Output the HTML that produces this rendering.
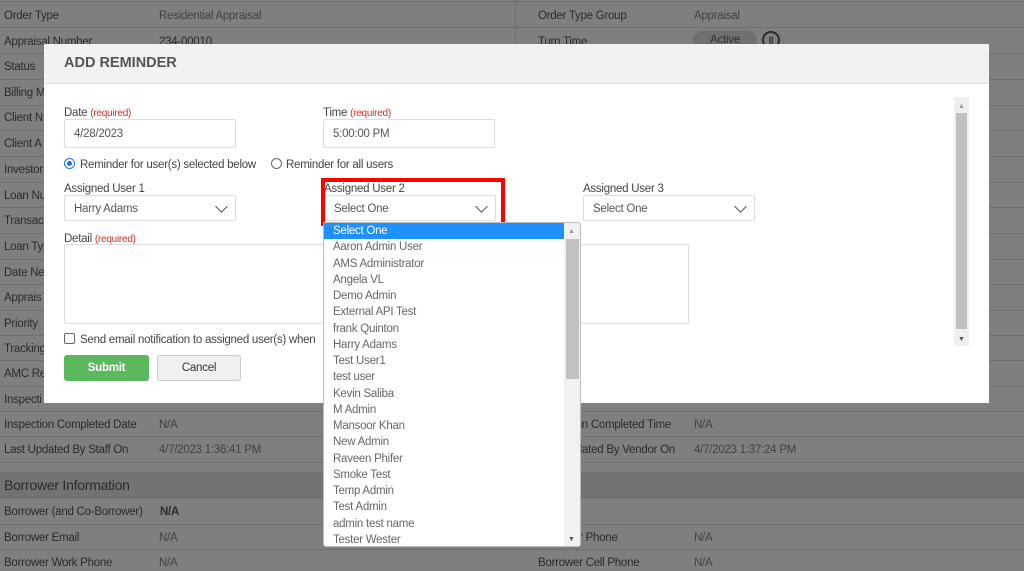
<!DOCTYPE html>
<html><head><style>
*{box-sizing:border-box;margin:0;padding:0}
body{width:1024px;height:571px;overflow:hidden;background:#7f7f7f;font-family:"Liberation Sans",sans-serif;font-size:11.5px;letter-spacing:-0.25px;line-height:16px;color:#2b2b2b;position:relative}
.a{position:absolute;white-space:nowrap}
.ln{position:absolute;left:0;width:1024px;height:1px;background:#6f6f6f}
.vl{position:absolute;left:515px;width:1px;background:#6f6f6f;top:0;height:411px}
.modal{position:absolute;left:44px;top:44px;width:945px;height:359px;background:#fff}
.mh{height:40px;background:#f2f2f2;border-bottom:1px solid #ddd;padding:11px 0 0 20px;font-size:14.5px;font-weight:bold;color:#555;letter-spacing:0}
.lab{position:absolute;color:#444;white-space:nowrap}
.req{color:#c9302c;font-size:10px}
.inp{position:absolute;height:29px;border:1px solid #ddd;border-radius:2px;background:#fff;padding:6px 9px;color:#555}
.chev{position:absolute;right:9px;top:9px;width:9px;height:9px;border-right:1.5px solid #555;border-bottom:1.5px solid #555;transform:rotate(45deg)}
.dd{position:absolute;left:323px;top:222px;width:258px;height:325px;background:#fff;border:1px solid #bbb;border-radius:0 3px 3px 3px;overflow:hidden}
.it{height:16.25px;line-height:17px;padding-left:9px;color:#666}
.it.s{background:#1e90ff;color:#fff}
</style></head><body>
<div class="ln" style="top:1px"></div>
<div class="ln" style="top:27px"></div><div class="ln" style="top:53px"></div><div class="ln" style="top:79px"></div><div class="ln" style="top:105px"></div><div class="ln" style="top:130px"></div><div class="ln" style="top:156px"></div><div class="ln" style="top:182px"></div><div class="ln" style="top:207px"></div><div class="ln" style="top:233px"></div><div class="ln" style="top:259px"></div><div class="ln" style="top:284px"></div><div class="ln" style="top:310px"></div><div class="ln" style="top:335px"></div><div class="ln" style="top:360px"></div><div class="ln" style="top:386px"></div><div class="ln" style="top:411px"></div><div class="ln" style="top:436px"></div><div class="ln" style="top:462px"></div>
<div class="a" style="left:0;top:472px;width:1024px;height:26px;background:#737373;border-bottom:1px solid #6a6a6a"></div>
<div class="ln" style="top:524px"></div><div class="ln" style="top:549px"></div>
<div class="vl"></div>
<div class="a" style="left:4px;top:8px">Order Type</div><div class="a" style="left:159px;top:8px;color:#444">Residential Appraisal</div>
<div class="a" style="left:538px;top:8px">Order Type Group</div><div class="a" style="left:694px;top:8px;color:#444">Appraisal</div>
<div class="a" style="left:4px;top:34px">Appraisal Number</div><div class="a" style="left:159px;top:34px">234-00010</div>
<div class="a" style="left:538px;top:34px">Turn Time</div>
<div class="a" style="left:693px;top:31px;width:64px;height:18px;border-radius:9px;background:#6f6f6f;text-align:center;line-height:19px;color:#333">Active</div>
<div class="a" style="left:762px;top:31px;width:18px;height:18px;border-radius:50%;border:2px solid #2b2b2b;font-size:9px;font-weight:bold;text-align:center;line-height:14px">||</div>
<div class="a" style="left:4px;top:59px">Status</div><div class="a" style="left:4px;top:85px">Billing M</div><div class="a" style="left:4px;top:110px">Client N</div><div class="a" style="left:4px;top:136px">Client A</div><div class="a" style="left:4px;top:162px">Investor</div><div class="a" style="left:4px;top:188px">Loan Nu</div><div class="a" style="left:4px;top:213px">Transac</div><div class="a" style="left:4px;top:239px">Loan Typ</div><div class="a" style="left:4px;top:265px">Date Ne</div><div class="a" style="left:4px;top:290px">Apprais</div><div class="a" style="left:4px;top:316px">Priority</div><div class="a" style="left:4px;top:341px">Tracking</div><div class="a" style="left:4px;top:366px">AMC Re</div><div class="a" style="left:4px;top:392px">Inspecti</div>
<div class="a" style="left:4px;top:417px">Inspection Completed Date</div><div class="a" style="left:159px;top:417px;color:#444">N/A</div>
<div class="a" style="left:538px;top:417px">Inspection Completed Time</div><div class="a" style="left:694px;top:417px;color:#444">N/A</div>
<div class="a" style="left:4px;top:442px">Last Updated By Staff On</div><div class="a" style="left:159px;top:442px;color:#444">4/7/2023 1:36:41 PM</div>
<div class="a" style="left:538px;top:442px">Last Updated By Vendor On</div><div class="a" style="left:694px;top:442px;color:#444">4/7/2023 1:37:24 PM</div>
<div class="a" style="left:4px;top:477px;font-size:14px">Borrower Information</div>
<div class="a" style="left:4px;top:504px">Borrower (and Co-Borrower)</div><div class="a" style="left:160px;top:504px;font-weight:bold">N/A</div>
<div class="a" style="left:4px;top:530px">Borrower Email</div><div class="a" style="left:159px;top:530px;color:#444">N/A</div>
<div class="a" style="left:538px;top:530px">Borrower Phone</div><div class="a" style="left:694px;top:530px;color:#444">N/A</div>
<div class="a" style="left:4px;top:555px">Borrower Work Phone</div><div class="a" style="left:159px;top:555px;color:#444">N/A</div>
<div class="a" style="left:538px;top:555px">Borrower Cell Phone</div><div class="a" style="left:694px;top:555px;color:#444">N/A</div>

<div class="modal">
<div class="mh">ADD REMINDER</div>
<div class="lab" style="left:20px;top:61px">Date <span class="req">(required)</span></div>
<div class="inp" style="left:20px;top:75px;width:172px">4/28/2023</div>
<div class="lab" style="left:279px;top:61px">Time <span class="req">(required)</span></div>
<div class="inp" style="left:279px;top:75px;width:172px">5:00:00 PM</div>
<div class="a" style="left:20px;top:114px;width:11px;height:11px;border-radius:50%;border:1px solid #1e73e8;background:#fff"><div style="margin:2px;width:5px;height:5px;border-radius:50%;background:#1e73e8"></div></div>
<div class="lab" style="left:36px;top:113px">Reminder for user(s) selected below</div>
<div class="a" style="left:227px;top:114px;width:11px;height:11px;border-radius:50%;border:1px solid #666"></div>
<div class="lab" style="left:242px;top:113px">Reminder for all users</div>
<div class="lab" style="left:20px;top:137px">Assigned User 1</div>
<div class="inp" style="left:20px;top:151px;width:172px;height:26px;padding-top:5px">Harry Adams<div class="chev" style="top:6px"></div></div>
<div class="lab" style="left:280px;top:137px">Assigned User 2</div>
<div class="inp" style="left:280px;top:151px;width:172px;height:26px;padding-top:5px">Select One<div class="chev" style="top:6px"></div></div>
<div class="lab" style="left:539px;top:137px">Assigned User 3</div>
<div class="inp" style="left:539px;top:151px;width:172px;height:26px;padding-top:5px">Select One<div class="chev" style="top:6px"></div></div>
<div class="lab" style="left:20px;top:187px">Detail <span class="req">(required)</span></div>
<div class="inp" style="left:20px;top:200px;width:625px;height:80px"></div>
<div class="a" style="left:20px;top:289px;width:11px;height:11px;border:1px solid #666;border-radius:2px"></div>
<div class="lab" style="left:36px;top:288px">Send email notification to assigned user(s) when</div>
<div class="a" style="left:20px;top:311px;width:85px;height:26px;background:#5cb85c;border-radius:3px;color:#fff;text-align:center;line-height:26px;font-weight:bold">Submit</div>
<div class="a" style="left:113px;top:311px;width:84px;height:26px;background:#f0f0f0;border:1px solid #ccc;border-radius:3px;color:#333;text-align:center;line-height:24px">Cancel</div>
<div class="a" style="left:910px;top:53px;width:15px;height:249px;background:#f0f0f0"><div style="margin:16px 2px 0;height:216px;background:#c1c1c1"></div></div>
<div class="a" style="left:914px;top:55px;font-size:7px;color:#999">▲</div>
<div class="a" style="left:914px;top:288px;font-size:7px;color:#555">▼</div>
</div>

<div class="a" style="left:321px;top:178px;width:184px;height:48px;border:4px solid #f00"></div>
<div class="dd">
<div class="it s">Select One</div><div class="it">Aaron Admin User</div><div class="it">AMS Administrator</div><div class="it">Angela VL</div><div class="it">Demo Admin</div><div class="it">External API Test</div><div class="it">frank Quinton</div><div class="it">Harry Adams</div><div class="it">Test User1</div><div class="it">test user</div><div class="it">Kevin Saliba</div><div class="it">M Admin</div><div class="it">Mansoor Khan</div><div class="it">New Admin</div><div class="it">Raveen Phifer</div><div class="it">Smoke Test</div><div class="it">Temp Admin</div><div class="it">Test Admin</div><div class="it">admin test name</div><div class="it">Tester Wester</div>
<div class="a" style="left:240px;top:0;width:17px;height:325px;background:#f1f1f1"><div style="margin:16px 2px 0;height:140px;background:#c1c1c1"></div></div>
<div class="a" style="left:244px;top:1px;font-size:7px;color:#999">▲</div>
<div class="a" style="left:244px;top:309px;font-size:7px;color:#555">▼</div>
</div>
</body></html>
